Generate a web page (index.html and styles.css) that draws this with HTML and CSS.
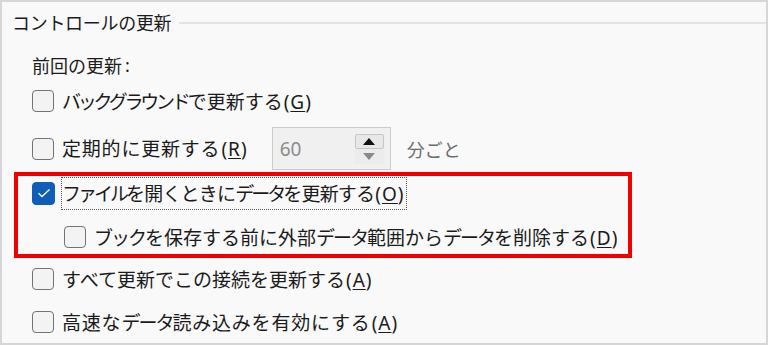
FILE: index.html
```html
<!DOCTYPE html>
<html lang="ja">
<head>
<meta charset="utf-8">
<link rel="stylesheet" href="styles.css">
</head>
<body>
<div class="panel">
  <div class="title-row">
    <span class="title">コントロールの更新</span>
    <span class="rule"></span>
  </div>
  <div class="row prev">前回の更新<span class="colon">:</span></div>
  <div class="row r1">
    <span class="cb"></span>
    <span class="label"><span class="k">バックグラウンド</span>で更新する<span class="acc">(<u>G</u>)</span></span>
  </div>
  <div class="row r2">
    <span class="cb"></span>
    <span class="label wide">定期的に更新する<span class="acc">(<u>R</u>)</span></span>
    <div class="spin">
      <span class="spin-val">60</span>
      <div class="spin-btns">
        <span class="sbtn up"><svg width="12" height="7" viewBox="0 0 12 7"><path d="M0 7 L6 0 L12 7 Z" fill="#111"/></svg></span>
        <span class="sbtn down"><svg width="12" height="7" viewBox="0 0 12 7"><path d="M0 0 L6 7 L12 0 Z" fill="#8a8a8a"/></svg></span>
      </div>
    </div>
    <span class="unit">分ごと</span>
  </div>
  <div class="highlight">
    <div class="row r3">
      <span class="cb checked"><svg width="14" height="10" viewBox="0 0 14 10"><path d="M1.5 5.2 L5 8.5 L12.5 1.5" fill="none" stroke="#fff" stroke-width="1.3"/></svg></span>
      <span class="label focus"><span class="k">ファイル</span>を開くときに<span class="k">データ</span>を更新する<span class="acc">(<u>O</u>)</span></span>
    </div>
    <div class="row r4">
      <span class="cb"></span>
      <span class="label"><span class="k">ブック</span>を保存する前に外部<span class="k">データ</span>範囲から<span class="k">データ</span>を削除する<span class="acc">(<u>D</u>)</span></span>
    </div>
  </div>
  <div class="row r5">
    <span class="cb"></span>
    <span class="label">すべて更新でこの接続を更新する<span class="acc">(<u>A</u>)</span></span>
  </div>
  <div class="row r6">
    <span class="cb"></span>
    <span class="label wide">高速な<span class="k">データ</span>読み込みを有効にする<span class="acc">(<u>A</u>)</span></span>
  </div>
</div>
</body>
</html>
```
FILE: styles.css
```css
html, body {
  margin: 0;
  padding: 0;
  background: #f9f9f9;
}
body {
  width: 768px;
  height: 345px;
  overflow: hidden;
  font-family: "Noto Sans CJK JP", "Noto Sans", sans-serif;
  font-size: 19px;
  color: #1b1b1b;
}
.panel {
  box-sizing: border-box;
  width: 768px;
  height: 345px;
  border: 2px solid #d6d6d6;
  background: #f9f9f9;
  display: flex;
  flex-direction: column;
}
.title-row {
  height: 40px;
  display: flex;
  align-items: center;
  padding-left: 10px;
}
.title {
  font-size: 18px;
  line-height: 20px;
  letter-spacing: -0.3px;
}
.rule {
  flex: 1;
  height: 2px;
  background: #e4e4e4;
  margin-left: 8px;
  margin-top: 2px;
}
.row {
  display: flex;
  align-items: center;
  padding-left: 30px;
  line-height: 22px;
}
.k {
  letter-spacing: -2px;
}
.r1 .k {
  letter-spacing: -3.2px;
}
.focus .k {
  letter-spacing: -3px;
}
.prev {
  font-size: 18px;
  height: 42px;
  margin-top: 2px;
}
.colon {
  font-family: "Noto Sans", sans-serif;
  margin-left: 3px;
}
.acc {
  font-family: "Noto Sans", sans-serif;
  font-size: 19px;
  letter-spacing: 1px;
  margin-left: 1px;
}
.r1 { height: 30px; }
.r2 { height: 43px; margin-top: 11px; }
.r5 { height: 30px; margin-top: 6px; }
.r6 { height: 30px; margin-top: 13px; }
.cb {
  box-sizing: border-box;
  width: 22px;
  height: 22px;
  border: 1.5px solid #737373;
  border-radius: 4px;
  background: #f3f3f3;
  flex: none;
  display: flex;
  align-items: center;
  justify-content: center;
}
.cb.checked {
  width: 23px;
  height: 23px;
  background: #0f5cb9;
  border-color: #0f5cb9;
}
.label {
  margin-left: 8px;
}
.label.wide {
  letter-spacing: 0.8px;
}
.label.focus {
  letter-spacing: -0.8px;
}
u {
  text-decoration-thickness: 1px;
  text-underline-offset: 2px;
}
.spin {
  box-sizing: border-box;
  width: 119px;
  height: 43px;
  margin-left: 24px;
  border: 1px solid #cbcbcb;
  background: #f0f0f0;
  display: flex;
  align-items: center;
  justify-content: space-between;
  padding: 0 6px 0 7px;
}
.spin-val {
  color: #8c8c8c;
  font-family: "Noto Sans", sans-serif;
  font-size: 19px;
}
.spin-btns {
  display: flex;
  flex-direction: column;
  width: 29px;
}
.sbtn {
  height: 15px;
  display: flex;
  align-items: center;
  justify-content: center;
  box-sizing: border-box;
}
.sbtn.up {
  background: #e8e8e8;
  border: 1px solid #c6c6c6;
  border-radius: 2px;
}
.sbtn.down {
  background: #ececec;
}
.unit {
  margin-left: 16px;
  color: #6e6e6e;
  font-size: 18px;
}
.highlight {
  box-sizing: border-box;
  width: 618px;
  margin-left: 12px;
  margin-top: 2px;
  border: 4px solid #f20000;
  padding-left: 14px;
  padding-bottom: 0;
}
.highlight .row { padding-left: 0; }
.r3 { height: 34px; }
.r4 { height: 34px; margin-top: 10px; padding-left: 32px !important; }
.focus {
  margin-left: 6px;
  padding: 5px 2px 5px 1px;
  outline: 1px dotted #555;
  outline-offset: -1px;
}
```
